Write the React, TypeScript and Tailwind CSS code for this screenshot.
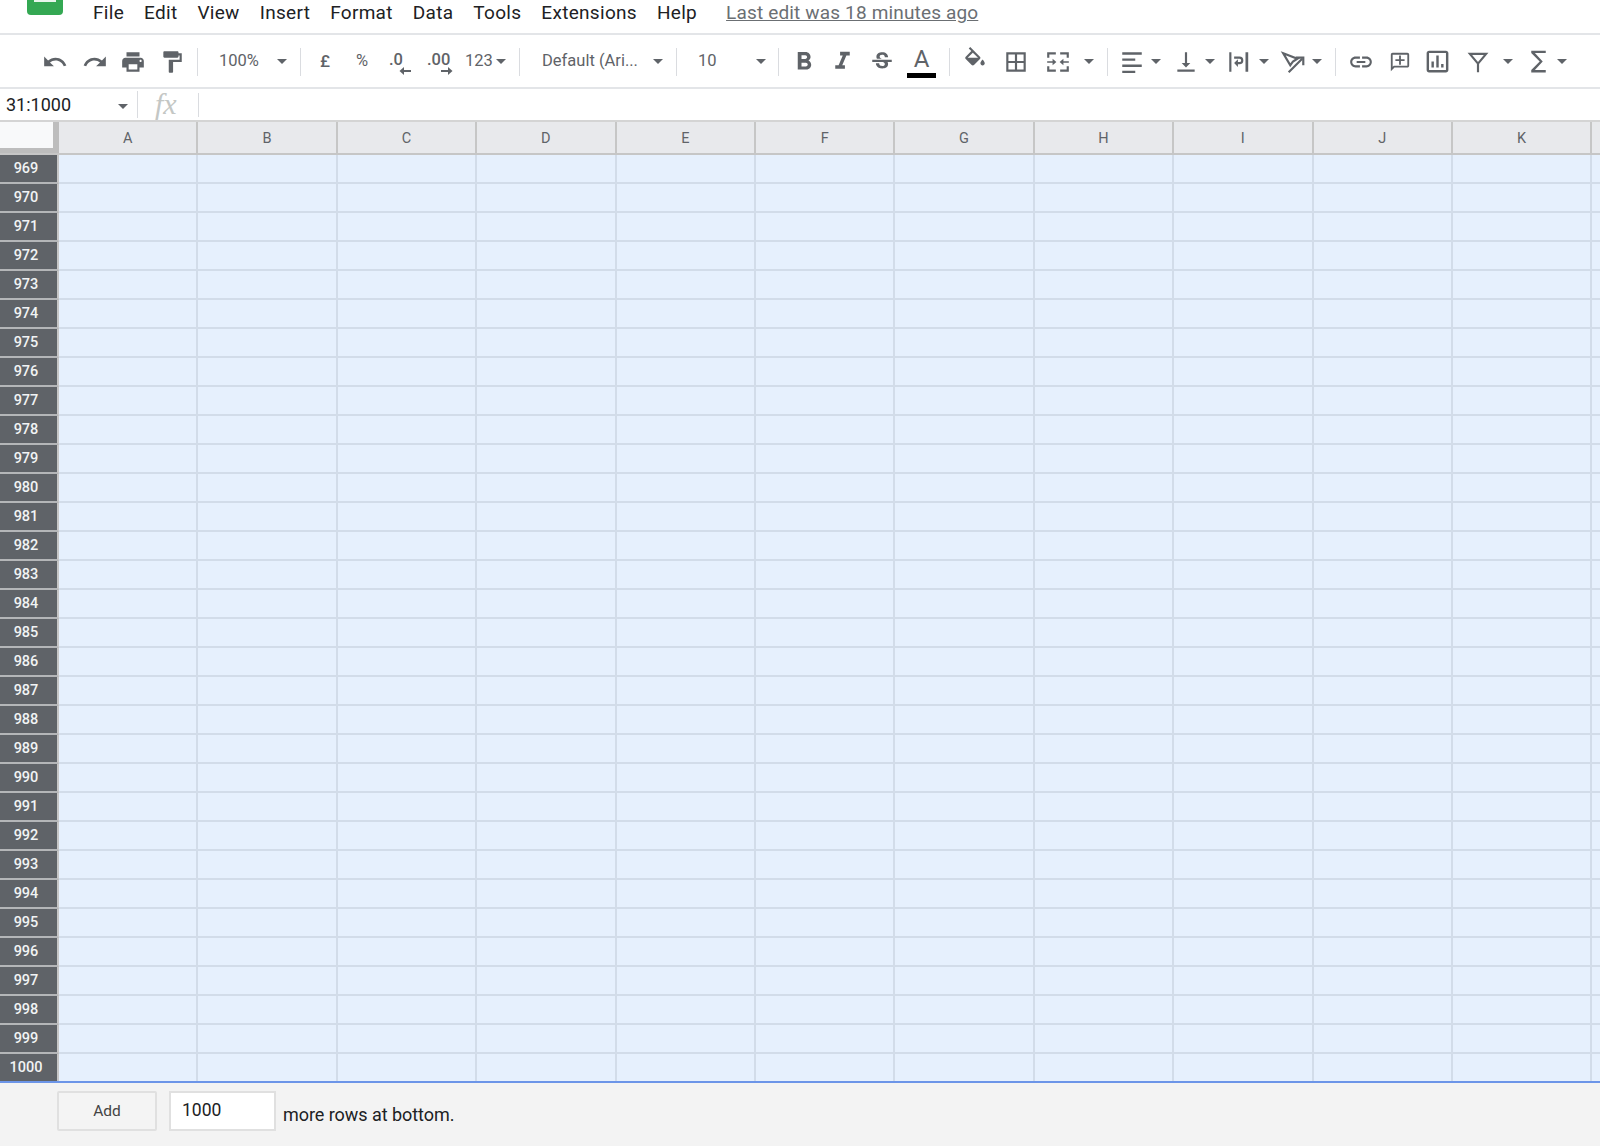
import React from "react";

const C = "#5f6368";

function Ico({ d, cls = "w-[26px] h-[26px]" }: { d: string; cls?: string }) {
  return (
    <svg viewBox="0 0 24 24" fill={C} className={"shrink-0 " + cls}>
      <path d={d} />
    </svg>
  );
}

function Caret({ cls = "" }: { cls?: string }) {
  return <div className={"w-0 h-0 shrink-0 border-x-[5px] border-t-[5px] border-x-transparent border-t-[#5f6368] " + cls} />;
}

function Sep({ cls = "" }: { cls?: string }) {
  return <div className={"w-px h-[28px] shrink-0 bg-[#dadce0] " + cls} />;
}

const MENU = ["File", "Edit", "View", "Insert", "Format", "Data", "Tools", "Extensions", "Help"];
const COLS = ["A", "B", "C", "D", "E", "F", "G", "H", "I", "J", "K"];
const ROWS = Array.from({ length: 32 }, (_, i) => 969 + i);

export default function App() {
  return (
    <div className="w-[1600px] h-[1146px] overflow-hidden flex flex-col bg-white font-['Roboto',sans-serif] text-[#202124]">
      {/* Menu bar */}
      <div className="h-[35px] shrink-0 flex items-start border-b-2 border-[#e3e5e8]">
        <div className="ml-[27px] mt-[-22px] w-[36px] h-[37px] rounded-[4px] bg-[#34a853] shrink-0 flex items-end justify-center">
          <div className="w-[22px] h-[2px] mb-[13px] bg-[#e8f5ec]" />
        </div>
        <div className="ml-[30px] flex gap-[20px] text-[19px] leading-[26px] tracking-[0.3px]">
          {MENU.map((m) => (
            <span key={m}>{m}</span>
          ))}
        </div>
        <span className="ml-[29px] text-[19px] leading-[26px] tracking-[0.16px] text-[#6b6f73] underline">
          Last edit was 18 minutes ago
        </span>
      </div>

      {/* Toolbar */}
      <div className="h-[54px] shrink-0 flex items-center pt-[1px] border-b-2 border-[#e3e5e8] text-[#5f6368]">
        <Ico cls="w-[26px] h-[26px] ml-[42px]" d="M12.5 8c-2.65 0-5.05.99-6.9 2.6L2 7v9h9l-3.62-3.62c1.39-1.16 3.16-1.88 5.12-1.88 3.54 0 6.55 2.31 7.6 5.5l2.37-.78C21.08 11.03 17.15 8 12.5 8z" />
        <Ico cls="w-[26px] h-[26px] ml-[14px]" d="M18.4 10.6C16.55 8.99 14.15 8 11.5 8c-4.65 0-8.58 3.03-9.96 7.22L3.9 16c1.05-3.19 4.05-5.5 7.6-5.5 1.95 0 3.73.72 5.12 1.88L13 16h9V7l-3.6 3.6z" />
        <Ico cls="w-[26px] h-[26px] ml-[12px]" d="M19 8H5c-1.66 0-3 1.34-3 3v6h4v4h12v-4h4v-6c0-1.66-1.34-3-3-3zm-3 11H8v-5h8v5zm3-7c-.55 0-1-.45-1-1s.45-1 1-1 1 .45 1 1-.45 1-1 1zm-1-9H6v4h12V3z" />
        <Ico cls="w-[26px] h-[26px] ml-[13px]" d="M18 4V3c0-.55-.45-1-1-1H5c-.55 0-1 .45-1 1v4c0 .55.45 1 1 1h12c.55 0 1-.45 1-1V6h1v4H9v11c0 .55.45 1 1 1h2c.55 0 1-.45 1-1v-9h8V4h-3z" />
        <Sep cls="ml-[12px]" />
        <span className="ml-[21px] w-[41px] shrink-0 text-[16.5px] leading-none">100%</span>
        <Caret cls="ml-[17px]" />
        <Sep cls="ml-[13px]" />
        <span className="ml-[18px] w-[12px] text-center text-[17px] font-medium leading-none">£</span>
        <span className="ml-[24px] w-[14px] text-center text-[16.5px] leading-none">%</span>
        <div className="ml-[20px] w-[24px] h-[30px] relative shrink-0">
          <span className="absolute left-0 top-[5px] text-[16.5px] font-medium leading-none">.0</span>
          <svg viewBox="0 0 12 8" className="absolute left-[10px] top-[20px] w-[12px] h-[8px]" fill={C}>
            <path d="M12 3H5V0L0.5 4 5 8V5h7z" />
          </svg>
        </div>
        <div className="ml-[14px] w-[30px] h-[30px] relative shrink-0">
          <span className="absolute left-0 top-[5px] text-[16.5px] font-medium leading-none">.00</span>
          <svg viewBox="0 0 12 8" className="absolute left-[14px] top-[20px] w-[12px] h-[8px]" fill={C}>
            <path d="M0 3h7V0l4.500 4L7 8V5H0z" />
          </svg>
        </div>
        <span className="ml-[8px] w-[30px] shrink-0 text-[16.5px] leading-none">123</span>
        <Caret cls="ml-[1px]" />
        <Sep cls="ml-[13px]" />
        <span className="ml-[22px] w-[100px] shrink-0 text-[16.5px] leading-none">Default (Ari...</span>
        <Caret cls="ml-[11px]" />
        <Sep cls="ml-[13px]" />
        <span className="ml-[21px] w-[20px] shrink-0 text-[16.5px] leading-none">10</span>
        <Caret cls="ml-[38px]" />
        <Sep cls="ml-[12px]" />
        <Ico cls="w-[30px] h-[30px] ml-[10px]" d="M15.6 10.79c.97-.67 1.65-1.77 1.65-2.79 0-2.26-1.75-4-4-4H7v14h7.04c2.09 0 3.71-1.7 3.71-3.79 0-1.52-.86-2.82-2.15-3.42zM10 6.5h3c.83 0 1.5.67 1.5 1.5s-.67 1.5-1.5 1.5h-3v-3zm3.5 9H10v-3h3.5c.83 0 1.5.67 1.5 1.5s-.67 1.5-1.5 1.5z" />
        <Ico cls="w-[29px] h-[29px] ml-[9px]" d="M10 4v3h2.21l-3.42 8H6v3h8v-3h-2.21l3.42-8H18V4z" />
        <Ico cls="w-[26px] h-[26px] ml-[12px]" d="M6.85 7.08C6.85 4.37 9.45 3 12.24 3c1.64 0 3 .49 3.9 1.28.77.65 1.46 1.73 1.46 3.24h-3.01c0-.31-.05-.59-.15-.85-.29-.86-1.2-1.28-2.25-1.28-1.86 0-2.34.94-2.34 1.72 0 .48.25.88.74 1.21.38.25.77.48 1.41.7H7.39c-.21-.34-.54-.89-.54-1.94zM21 12v-2H3v2h9.620c1.15.45 1.96.75 1.96 1.97 0 1-.81 1.67-2.28 1.67-1.54 0-2.93-.54-2.93-2.51H6.4c0 .55.08 1.13.24 1.58.81 2.29 3.29 3.3 5.67 3.3 2.27 0 5.3-.89 5.3-4.05 0-.3-.01-1.16-.48-1.94H21V12z" />
        <div className="ml-[12px] w-[29px] h-[33px] shrink-0 flex flex-col items-center">
          <span className="mt-[2px] text-[24px] leading-[24px] h-[24px]">A</span>
          <div className="mt-[2px] w-[29px] h-[5px] bg-black" />
        </div>
        <Sep cls="ml-[13px]" />
        <Ico cls="w-[26px] h-[26px] ml-[12px] -mt-[4px]" d="M16.56 8.94L7.62 0 6.21 1.41l2.38 2.38-5.15 5.15c-.59.59-.59 1.54 0 2.12l5.5 5.5c.29.29.68.44 1.06.44s.77-.15 1.06-.44l5.5-5.5c.59-.58.59-1.53 0-2.12zM5.21 10L10 5.21 14.79 10H5.21zM19 11.5s-2 2.17-2 3.5c0 1.1.9 2 2 2s2-.9 2-2c0-1.33-2-3.5-2-3.5z" />
        <Ico cls="w-[26px] h-[26px] ml-[15px]" d="M3 3v18h18V3H3zm8 16H5v-6h6v6zm0-8H5V5h6v6zm8 8h-6v-6h6v6zm0-8h-6V5h6v6z" />
        <Ico cls="w-[26px] h-[26px] ml-[16px]" d="M2 3h8v2H4v3H2V3zm12 0h8v5h-2V5h-6V3zM2 16h2v3h6v2H2v-5zm18 0h2v5h-8v-2h6v-3zM2 11.250h5V9l3.500 3L7 15v-2.250H2v-1.500zm20 0v1.500h-5V15l-3.500-3L17 9v2.250h5z" />
        <Caret cls="ml-[13px]" />
        <Sep cls="ml-[13px]" />
        <Ico cls="w-[26px] h-[26px] ml-[11px]" d="M3 3h18v2.200H3V3zm0 5.700h12v2.200H3V8.700zm0 5.700h18v2.200H3v-2.200zm0 5.600h12v2.200H3V20z" />
        <Caret cls="ml-[6px]" />
        <Ico cls="w-[26px] h-[26px] ml-[12px]" d="M16 13h-3V3h-2v10H8l4 4 4-4zM4 19v2h16v-2H4z" />
        <Caret cls="ml-[6px]" />
        <Ico cls="w-[26px] h-[26px] ml-[11px]" d="M3 3h2v18H3V3zm15 0h2.500v18H18V3zM7.500 7h5a3.500 3.500 0 0 1 0 7H11v2.500L7.500 13 11 9.500V12h1.500a1.500 1.500 0 0 0 0-3h-5V7z" />
        <Caret cls="ml-[7px]" />
        <svg viewBox="0 0 24 24" fill="none" stroke={C} strokeWidth="2" className="ml-[11px] w-[26px] h-[26px] shrink-0">
          <path d="M3 4l13 5-4 2.500-2.500 3.500zM8 21.500 20.500 9" />
          <path d="M14.500 8H21.500V15" />
        </svg>
        <Caret cls="ml-[6px]" />
        <Sep cls="ml-[13px]" />
        <Ico cls="w-[26px] h-[26px] ml-[12px]" d="M3.9 12c0-1.71 1.39-3.1 3.1-3.1h4V7H7c-2.76 0-5 2.24-5 5s2.24 5 5 5h4v-1.9H7c-1.71 0-3.1-1.39-3.1-3.1zM8 13h8v-2H8v2zm9-6h-4v1.9h4c1.71 0 3.1 1.39 3.1 3.1s-1.39 3.1-3.1 3.1h-4V17h4c2.76 0 5-2.24 5-5s-2.24-5-5-5z" />
        <Ico cls="w-[22px] h-[22px] ml-[15px]" d="M2 22V4c0-1.1.9-2 2-2h16c1.1 0 2 .9 2 2v12c0 1.1-.9 2-2 2H6l-4 4zm2-4.830L5.170 16H20V4H4v13.170zM13 5h-2v4H7v2h4v4h2v-4h4V9h-4z" />
        <Ico cls="w-[29px] h-[29px] ml-[12px]" d="M19 3H5c-1.100 0-2 .9-2 2v14c0 1.100.9 2 2 2h14c1.100 0 2-.9 2-2V5c0-1.100-.9-2-2-2zm0 16H5V5h14v14zM9 12H7v5h2zm4-5h-2v10h2zm4 7h-2v3h2z" />
        <svg viewBox="0 0 24 24" fill="none" stroke={C} strokeWidth="2" className="ml-[13px] w-[26px] h-[26px] shrink-0">
          <path d="M4.500 4.500h15L12 13.500zM12 13v8.500" />
        </svg>
        <Caret cls="ml-[12px]" />
        <Ico cls="w-[29px] h-[29px] ml-[11px]" d="M18 3H6v2l7 7-7 7v2h12v-2H9l6.500-7L9 5h9z" />
        <Caret cls="ml-[4px]" />
      </div>

      {/* Formula bar */}
      <div className="h-[33px] shrink-0 flex items-center border-b-2 border-[#d4d4d4]">
        <span className="ml-[6px] w-[108px] shrink-0 text-[18px] leading-none">31:1000</span>
        <Caret cls="ml-[4px] mt-[3px]" />
        <div className="ml-[9px] w-px h-[27px] bg-[#dadce0] shrink-0" />
        <span className="ml-[17px] w-[26px] shrink-0 font-['Liberation_Serif',serif] italic text-[30px] leading-none text-[#c4c7c5] -mt-[2px]">fx</span>
        <div className="ml-[17px] w-px h-[24px] bg-[#dadce0] shrink-0" />
      </div>

      {/* Column header */}
      <div className="h-[33px] shrink-0 flex border-b-2 border-[#c6c6c6]">
        <div className="w-[59px] shrink-0 bg-[#bdbdbd] pr-[6px] pb-[5px]">
          <div className="h-full bg-[#f8f9fa]" />
        </div>
        {COLS.map((c) => (
          <div
            key={c}
            className="w-[139.4px] shrink-0 bg-[#e8e9ec] border-r-2 border-[#c6c6c6] flex items-center justify-center pt-[2px] text-[14.5px] text-[#5f6368]"
          >
            {c}
          </div>
        ))}
        <div className="flex-1 bg-[#e8e9ec]" />
      </div>

      {/* Rows */}
      <div className="shrink-0 flex flex-col">
        {ROWS.map((r) => (
          <div key={r} className="h-[29px] flex">
            <div className="w-[59px] shrink-0 bg-[#5f6368] border-b-2 border-b-[#b4b6b8] border-r-2 border-r-[#c6c6c6] pr-[5px] pt-[1px] flex items-center justify-center text-[14.5px] font-medium text-[#f1f3f4]">
              {r}
            </div>
            {COLS.map((c) => (
              <div key={c} className="w-[139.4px] shrink-0 bg-[#e6f0fd] border-b-2 border-r-2 border-[#d2dce9]" />
            ))}
            <div className="flex-1 bg-[#e6f0fd] border-b-2 border-[#d2dce9]" />
          </div>
        ))}
      </div>

      {/* Footer */}
      <div className="flex-1 relative bg-[#f3f3f3] flex items-start border-t-2 border-[#6c95e8] -mt-[2px] pt-[8px]">
        <div className="ml-[57px] w-[100px] h-[40px] shrink-0 rounded-[2px] border-2 border-[#e0e0e0] bg-[#f4f4f4] flex items-center justify-center pt-[1px] text-[15.5px] text-[#444]">
          Add
        </div>
        <div className="ml-[12px] w-[107px] h-[40px] shrink-0 border-2 border-[#e0e0e0] bg-white flex items-center pl-[11px] pb-[1px] text-[17.5px]">
          1000
        </div>
        <span className="ml-[7px] mt-[11px] text-[18px] leading-[26px] tracking-[-0.05px]">more rows at bottom.</span>
      </div>
    </div>
  );
}
